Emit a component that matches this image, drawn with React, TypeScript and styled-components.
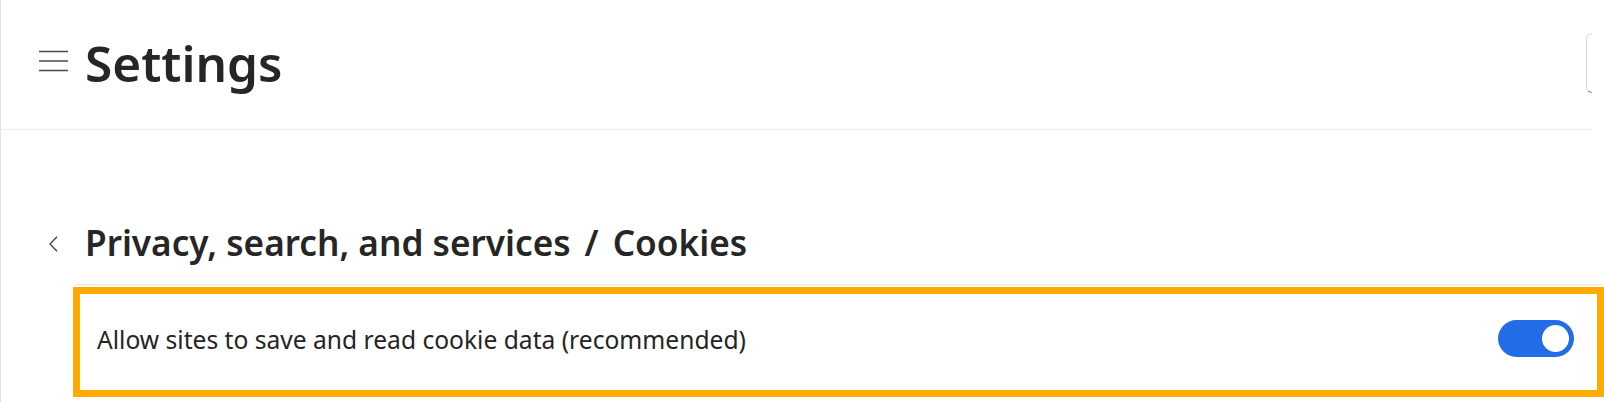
import React from "react";
import styled, { createGlobalStyle } from "styled-components";

const GlobalStyle = createGlobalStyle`
  html, body {
    margin: 0;
    padding: 0;
    background: #ffffff;
    overflow: hidden;
  }
  body {
    font-family: "Noto Sans", Lato, Arial, sans-serif;
    color: #242424;
  }
  * { box-sizing: border-box; }
`;

const Page = styled.div`
  width: 1604px;
  min-height: 402px;
  border-left: 1px solid #e3e3e3;
`;

const Header = styled.header`
  width: 1591px;
  height: 130px;
  display: flex;
  align-items: center;
  padding-left: 37px;
  border-bottom: 1px solid #ebebeb;
  overflow: hidden;
`;

const MenuButton = styled.button`
  flex: none;
  width: 31px;
  height: 22px;
  padding: 0;
  margin: 0 16px 8px 0;
  border: none;
  background: transparent;
  color: #424242;
  display: flex;
`;

const Title = styled.h1`
  margin: 0 0 2px 0;
  font-size: 49.5px;
  font-weight: 600;
  line-height: 1.2;
  color: #262626;
  letter-spacing: 0;
`;

const SearchBox = styled.div`
  flex: none;
  margin-left: auto;
  margin-right: -294px;
  width: 300px;
  height: 60px;
  border: 1px solid #d6d6d6;
  border-bottom-color: #8a8a8a;
  border-radius: 6px;
  margin-bottom: 4px;
`;

const Main = styled.main`
  padding-top: 91px;
`;

const Breadcrumb = styled.div`
  display: flex;
  align-items: center;
  padding-left: 47px;
  height: 42px;
`;

const BackButton = styled.button`
  flex: none;
  width: 12px;
  height: 16px;
  padding: 0;
  margin: 4px 25px 0 0;
  border: none;
  background: transparent;
  color: #424242;
  display: flex;
`;

const Heading = styled.h2`
  margin: 0;
  font-size: 35.2px;
  font-weight: 600;
  line-height: 42px;
  color: #262626;
  white-space: nowrap;
`;

const Separator = styled.span`
  margin: 0 14px;
`;

const Card = styled.section`
  margin: 21px 0 0 74px;
  border-top: 1px solid #e6e6e6;
  border-radius: 4px 4px 0 0;
`;

const Row = styled.div`
  margin: 2px 0 0 -2px;
  height: 110px;
  border: 7px solid #ffab00;
  padding: 0 23px 7px 17px;
  display: flex;
  align-items: center;
  justify-content: space-between;
`;

const Label = styled.span`
  font-size: 24.6px;
  font-weight: 400;
  line-height: 29px;
  color: #242424;
  padding-top: 2px;
`;

const Toggle = styled.button<{ $on: boolean }>`
  position: relative;
  flex: none;
  width: 76px;
  height: 37px;
  padding: 0;
  border: none;
  border-radius: 19px;
  background: ${(p) => (p.$on ? "#226ce8" : "#c4c4c4")};
`;

const Knob = styled.span<{ $on: boolean }>`
  position: absolute;
  top: 5px;
  left: ${(p) => (p.$on ? "44px" : "5px")};
  width: 27px;
  height: 27px;
  border-radius: 50%;
  background: #ffffff;
`;

export default function App() {
  return (
    <>
      <GlobalStyle />
      <Page>
        <Header>
          <MenuButton aria-label="Menu">
            <svg width="31" height="22" viewBox="0 0 31 22" fill="none">
              <path d="M1 1.5h29M1 11h29M1 20.5h29" stroke="#4a4a4a" strokeWidth="1.6" />
            </svg>
          </MenuButton>
          <Title>Settings</Title>
          <SearchBox />
        </Header>
        <Main>
          <Breadcrumb>
            <BackButton aria-label="Back">
              <svg width="12" height="16" viewBox="0 0 12 16" fill="none">
                <path d="M9 0.8L2 8l7 7.2" stroke="#424242" strokeWidth="1.3" />
              </svg>
            </BackButton>
            <Heading>
              Privacy, search, and services<Separator>/</Separator>Cookies
            </Heading>
          </Breadcrumb>
          <Card>
            <Row>
              <Label>Allow sites to save and read cookie data (recommended)</Label>
              <Toggle $on={true} aria-label="Allow cookies">
                <Knob $on={true} />
              </Toggle>
            </Row>
          </Card>
        </Main>
      </Page>
    </>
  );
}
